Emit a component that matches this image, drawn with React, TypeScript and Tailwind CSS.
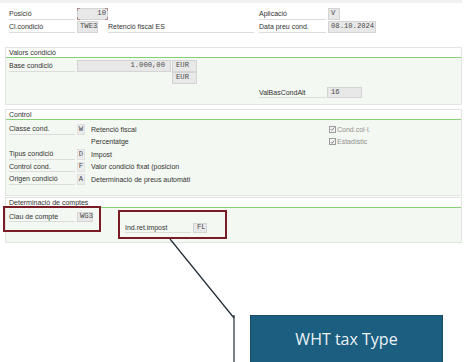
import React from "react";

const lbl =
  "w-[66px] shrink-0 h-full border-b border-[#dcdcdc] flex items-center leading-none whitespace-nowrap";
const lbl67 =
  "w-[67px] shrink-0 h-full border-b border-[#dcdcdc] flex items-center leading-none whitespace-nowrap";
const inp =
  "shrink-0 h-full bg-[#e8e8e8] border border-[#d4d4d4] font-['Liberation_Mono',monospace] text-[7.2px] text-[#4a4a4a] flex items-center leading-none px-[2px] whitespace-nowrap";

function Corner({ pos }: { pos: string }) {
  return <span className={"absolute w-[3px] h-[3px] border-[#b58a8a] " + pos} />;
}

function Check({ label }: { label: string }) {
  return (
    <div className="flex items-center gap-[1px] text-[#8f8f8f]">
      <span className="w-[7px] h-[7px] border border-[#9c9c9c] bg-[#f4f4f4] flex items-center justify-center">
        <svg viewBox="0 0 8 8" className="w-[6px] h-[6px]">
          <path d="M1.2 4.2 L3.2 6.2 L6.8 1.5" fill="none" stroke="#6f6f6f" strokeWidth="1.3" />
        </svg>
      </span>
      <span className="leading-none">{label}</span>
    </div>
  );
}

function Section({
  title,
  bodyH,
  className,
  children,
}: {
  title: string;
  bodyH: string;
  className?: string;
  children: React.ReactNode;
}) {
  return (
    <div className={"ml-[5px] w-[457px] border border-[#e1e7e0] " + (className || "")}>
      <div className="h-[9px] bg-[#fdfefd] pl-[3px] flex items-end leading-none pb-[1px]">{title}</div>
      <div className="h-px bg-[#86d078]" />
      <div className={"bg-[#f4f8f2] pl-[3px] " + bodyH}>{children}</div>
    </div>
  );
}

export default function App() {
  return (
    <div className="relative w-[468px] h-[362px] overflow-hidden bg-white font-['Liberation_Sans',Arial,sans-serif] text-[7px] text-[#333]">
      {/* header */}
      <div className="h-[47px] w-[462px] border-t-[3px] border-[#f1f1f1] pt-[5px] pl-[9px] flex flex-col gap-[1px]">
        <div className="flex h-[12px]">
          <div className={lbl}>Posició</div>
          <div className={inp + " relative ml-[2px] w-[31px] justify-end pr-[1px]"}>
            10
            <Corner pos="-left-[1px] -top-[1px] border-l border-t" />
            <Corner pos="-right-[1px] -top-[1px] border-r border-t" />
            <Corner pos="-left-[1px] -bottom-[1px] border-l border-b" />
            <Corner pos="-right-[1px] -bottom-[1px] border-r border-b" />
          </div>
          <div className="w-[151px] shrink-0" />
          <div className={lbl67}>Aplicació</div>
          <div className={inp + " ml-[2px] w-[12px]"}>V</div>
        </div>
        <div className="flex h-[12px]">
          <div className={lbl}>Cl.condició</div>
          <div className={inp + " ml-[2px] w-[21px]"}>TWE3</div>
          <div className="ml-[10px] w-[146px] shrink-0 h-full border-b border-[#dcdcdc] flex items-center leading-none">
            Retenció fiscal ES
          </div>
          <div className="w-[5px] shrink-0" />
          <div className={lbl67}>Data preu cond.</div>
          <div className={inp + " ml-[2px] w-[48px]"}>08.10.2024</div>
        </div>
      </div>

      {/* Valors condició */}
      <Section title="Valors condició" bodyH="h-[46px] pt-[2px]">
        <div className="flex h-[12px]">
          <div className={lbl}>Base condició</div>
          <div className={inp + " ml-[2px] w-[94px] justify-end pr-[5px]"}>1.000,00</div>
          <div className={inp + " ml-[1px] w-[25px] pl-[3px]"}>EUR</div>
        </div>
        <div className="flex h-[12px]">
          <div className="w-[163px] shrink-0" />
          <div className={inp + " w-[25px] pl-[3px]"}>EUR</div>
        </div>
        <div className="flex h-[11px] mt-[3px]">
          <div className="w-[250px] shrink-0" />
          <div className={lbl67}>ValBasCondAlt</div>
          <div className={inp + " ml-[1px] w-[35px] pl-[3px]"}>16</div>
        </div>
      </Section>

      {/* Control */}
      <Section title="Control" bodyH="h-[75px] pt-[3px]" className="mt-[4px]">
        {[
          { l: "Classe cond.", v: "W", t: "Retenció fiscal", c: "Cond.col·l." },
          { l: "", v: "", t: "Percentatge", c: "Estadístic" },
          { l: "Tipus condició", v: "D", t: "Impost", c: "" },
          { l: "Control cond.", v: "F", t: "Valor condició fixat (posicion", c: "" },
          { l: "Origen condició", v: "A", t: "Determinació de preus automàti", c: "" },
        ].map((r, i) => (
          <div key={i} className="flex h-[12.5px] py-[1px]">
            {r.l ? (
              <>
                <div className={lbl}>{r.l}</div>
                <div className={inp + " ml-[2px] w-[8px] justify-center px-0 bg-[#ececec] border-[#e0e0e0]"}>{r.v}</div>
              </>
            ) : (
              <div className="w-[76px] shrink-0" />
            )}
            <div className="ml-[6px] w-[238px] shrink-0 flex items-center leading-none whitespace-nowrap">{r.t}</div>
            {r.c && <Check label={r.c} />}
          </div>
        ))}
      </Section>

      {/* Determinació de comptes */}
      <Section title="Determinació de comptes" bodyH="h-[34px] pt-[4px]" className="mt-px">
        <div className="flex h-[10px]">
          <div className={lbl}>Clau de compte</div>
          <div className={inp + " ml-[2px] w-[16px] text-[6.6px] px-[1px]"}>WG3</div>
        </div>
        <div className="flex h-[10px] mt-px">
          <div className="w-[116px] shrink-0" />
          <div className={lbl}>Ind.ret.impost</div>
          <div className={inp + " ml-[2px] w-[14px] text-[6.6px] pl-[3px]"}>FL</div>
        </div>
      </Section>

      {/* annotation box */}
      <div className="mt-[72px] ml-[250px] w-[193px] h-[48px] bg-[#1b5e7f] border border-[#164d69] flex items-center justify-center font-['Open_Sans',sans-serif] text-[16px] text-[#eaf2f7] leading-none">
        WHT tax Type
      </div>

      {/* red highlight boxes */}
      <div className="absolute left-[3px] top-[206px] w-[98px] h-[26px] border-2 border-[#7a1c25]" />
      <div className="absolute left-[118px] top-[210px] w-[109px] h-[29px] border-2 border-[#7a1c25]" />

      {/* connector line */}
      <svg className="absolute left-0 top-0 pointer-events-none" width="468" height="362">
        <path d="M170 239 L234 318" stroke="#1f2a35" strokeWidth="1.2" fill="none" />
        <path d="M234 315 L234 362" stroke="#1f2a35" strokeWidth="1.2" fill="none" />
      </svg>
    </div>
  );
}
